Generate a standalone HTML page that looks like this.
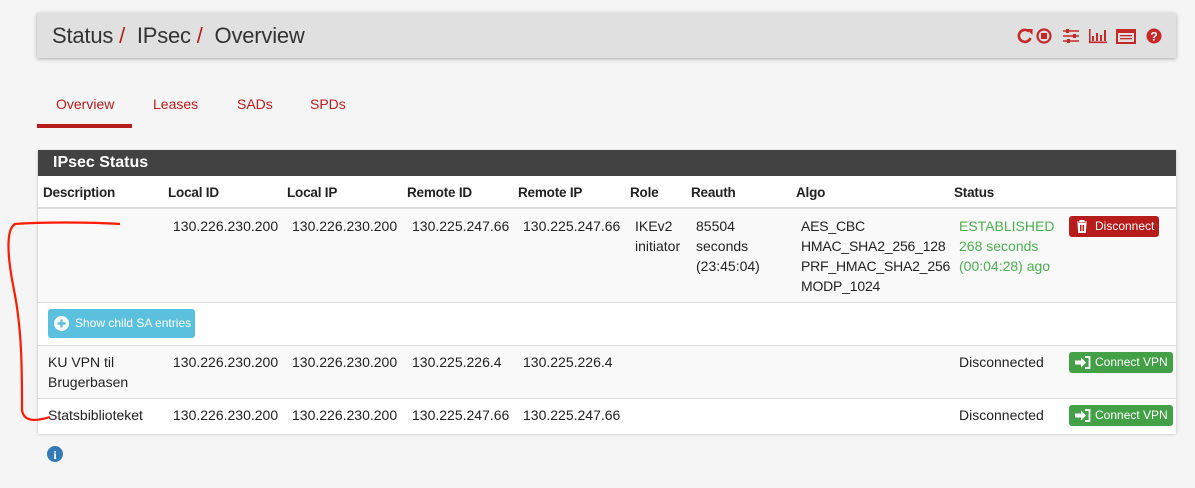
<!DOCTYPE html>
<html><head><meta charset="utf-8"><style>
body{margin:0;background:#f5f5f5;font-family:"Liberation Sans",sans-serif;width:1195px;height:488px;overflow:hidden;position:relative;color:#222}
.hdr{position:absolute;left:37px;top:13px;width:1139px;height:45px;background:#e0e0e0;box-shadow:0 1px 4px rgba(0,0,0,.3)}
.hdr h1{margin:0;position:absolute;left:15px;top:10px;font-size:22px;font-weight:normal;color:#333;letter-spacing:-.2px}
.hdr h1 span{color:#b71c1c}
.icons{position:absolute;left:980px;top:14px}
.tabs{position:absolute;left:37px;top:96px;font-size:14px;color:#b71c1c}
.tabs span{position:absolute;white-space:nowrap}
.ul{position:absolute;left:37px;top:124px;width:95px;height:4px;background:#b71c1c}
.panel{position:absolute;left:38px;top:150px;width:1138px;height:283px;background:#fff;box-shadow:0 1px 3px rgba(0,0,0,.25)}
.ph{height:26px;background:#424242;color:#fff;font-weight:bold;font-size:16px;line-height:26px;padding-left:15px}
.t{position:absolute;font-size:14px;line-height:20px;white-space:nowrap}
.b{font-weight:bold;font-size:13.5px;letter-spacing:-.2px}
.row{position:absolute;left:0;width:1138px;border-top:1px solid #ddd}
.btn{position:absolute;color:#fff;font-size:12px;border-radius:3px;height:21px;line-height:21px;padding:0 5px 0 26px}
.g{color:#4caf50}
</style></head><body>
<div class="hdr"><h1>Status <span>/</span>&nbsp; IPsec <span>/</span>&nbsp; Overview</h1>
<div class="icons">
<svg width="146" height="18" viewBox="0 0 146 18"><g fill="none" stroke="#c62828" stroke-width="2.6"><path d="M12 4.5A6 6 0 1 0 13.5 11"/></g><path d="M9.5 2h6v6z" fill="#c62828"/>
<circle cx="27" cy="9" r="6.5" fill="none" stroke="#c62828" stroke-width="2.2"/><rect x="24" y="6" width="6" height="6" fill="#c62828"/>
<g stroke="#c62828" stroke-width="1.6"><path d="M46 4h16M46 9h16M46 14h16"/></g><g fill="#c62828"><rect x="49" y="2" width="3" height="4"/><rect x="56" y="7" width="3" height="4"/><rect x="50" y="12" width="3" height="4"/></g>
<g fill="#c62828"><rect x="72" y="2" width="1.6" height="14"/><rect x="72" y="14.5" width="18" height="1.6"/><rect x="75" y="9" width="2" height="5"/><rect x="79" y="6" width="2" height="8"/><rect x="83" y="8" width="2" height="6"/><rect x="87" y="3" width="2" height="11"/></g>
<rect x="100" y="3" width="18" height="13" fill="none" stroke="#c62828" stroke-width="2"/><g fill="#c62828"><rect x="100" y="3" width="18" height="3"/><rect x="103" y="8" width="12" height="1.3"/><rect x="103" y="11" width="12" height="1.3"/></g>
<circle cx="137" cy="9" r="7.5" fill="#c62828"/><text x="137" y="13.5" font-size="12" font-weight="bold" fill="#fff" text-anchor="middle" font-family="Liberation Sans">?</text></svg>
</div></div>
<div class="tabs"><span style="left:19px">Overview</span><span style="left:116px">Leases</span><span style="left:200px">SADs</span><span style="left:273px">SPDs</span></div>
<div class="ul"></div>
<div class="panel">
<div class="ph">IPsec Status</div>
<div class="t b" style="left:5px;top:33px">Description</div><div class="t b" style="left:130px;top:33px">Local ID</div><div class="t b" style="left:249px;top:33px">Local IP</div><div class="t b" style="left:369px;top:33px">Remote ID</div><div class="t b" style="left:480px;top:33px">Remote IP</div><div class="t b" style="left:592px;top:33px">Role</div><div class="t b" style="left:653px;top:33px">Reauth</div><div class="t b" style="left:758px;top:33px">Algo</div><div class="t b" style="left:916px;top:33px">Status</div>
<div class="row" style="top:57px;height:94px;background:#f9f9f9;border-top:2px solid #ddd"></div>
<div class="row" style="top:152px;height:42px;background:#fff"></div>
<div class="row" style="top:195px;height:52px;background:#f9f9f9"></div>
<div class="row" style="top:248px;height:35px;background:#fff"></div>
<div class="t" style="left:135px;top:66px">130.226.230.200</div><div class="t" style="left:254px;top:66px">130.226.230.200</div><div class="t" style="left:374px;top:66px">130.225.247.66</div><div class="t" style="left:485px;top:66px">130.225.247.66</div>
<div class="t" style="left:597px;top:66px">IKEv2<br>initiator</div><div class="t" style="left:658px;top:66px">85504<br>seconds<br>(23:45:04)</div><div class="t" style="left:763px;top:66px;letter-spacing:-.2px">AES_CBC<br>HMAC_SHA2_256_128<br>PRF_HMAC_SHA2_256<br>MODP_1024</div>
<div class="t g" style="left:921px;top:66px">ESTABLISHED<br>268 seconds<br>(00:04:28) ago</div>
<div class="btn" style="left:1031px;top:66px;background:#b71c1c">Disconnect<svg style="position:absolute;left:7px;top:4px" width="12" height="13"><path d="M1 2h10M4 2V0.5h4V2M2 3.5h8l-.7 9H2.7z" fill="#fff" stroke="#fff"/><path d="M4.5 5v6M6 5v6M7.5 5v6" stroke="#b71c1c"/></svg></div>
<div class="btn" style="left:10px;top:159px;height:29px;line-height:29px;background:#5bc0de;padding-left:27px;padding-right:4px">Show child SA entries<svg style="position:absolute;left:6px;top:7px" width="15" height="15"><circle cx="7.5" cy="7.5" r="7.5" fill="#fff"/><path d="M7.5 3.5v8M3.5 7.5h8" stroke="#5bc0de" stroke-width="2.4"/></svg></div>
<div class="t" style="left:10px;top:202px">KU VPN til<br>Brugerbasen</div><div class="t" style="left:135px;top:202px">130.226.230.200</div><div class="t" style="left:254px;top:202px">130.226.230.200</div><div class="t" style="left:374px;top:202px">130.225.226.4</div><div class="t" style="left:485px;top:202px">130.225.226.4</div><div class="t" style="left:921px;top:202px">Disconnected</div>
<div class="t" style="left:10px;top:255px">Statsbiblioteket</div><div class="t" style="left:135px;top:255px">130.226.230.200</div><div class="t" style="left:254px;top:255px">130.226.230.200</div><div class="t" style="left:374px;top:255px">130.225.247.66</div><div class="t" style="left:485px;top:255px">130.225.247.66</div><div class="t" style="left:921px;top:255px">Disconnected</div>
<div class="btn" style="left:1031px;top:202px;background:#43a047">Connect VPN<svg style="position:absolute;left:5px;top:4px" width="18" height="13"><path d="M1 4.5h6V1.5l5 5-5 5v-3H1z" fill="#fff"/><path d="M11 1h4.5v11H11" fill="none" stroke="#fff" stroke-width="1.8"/></svg></div>
<div class="btn" style="left:1031px;top:255px;background:#43a047">Connect VPN<svg style="position:absolute;left:5px;top:4px" width="18" height="13"><path d="M1 4.5h6V1.5l5 5-5 5v-3H1z" fill="#fff"/><path d="M11 1h4.5v11H11" fill="none" stroke="#fff" stroke-width="1.8"/></svg></div>
</div>
<svg style="position:absolute;left:0;top:0" width="1195" height="488"><path d="M120 224C90 222 40 222 15 224C5 230 8 260 14 290C22 330 22 370 22 410C24 424 40 420 50 417" fill="none" stroke="#ff1a00" stroke-width="2.2"/>
<circle cx="55" cy="454" r="8" fill="#337ab7"/><text x="55" y="459" font-size="12" font-weight="bold" fill="#fff" text-anchor="middle" font-family="Liberation Serif">i</text></svg>
</body></html>
